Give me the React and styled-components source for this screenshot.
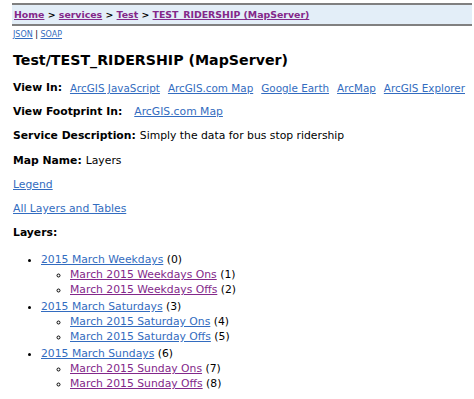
import React from "react";
import styled, { createGlobalStyle } from "styled-components";

const Global = createGlobalStyle`
  html, body { margin: 0; padding: 0; background: #fff; }
  body { font-family: "DejaVu Sans", Verdana, sans-serif; font-size: 10.8px; color: #000; }
`;

const Page = styled.div`
  padding: 3px 2px 0 12px;
`;

const Crumbs = styled.div`
  background: #e3eef8;
  border-top: 2px solid #808080;
  border-bottom: 2px solid #808080;
  padding: 3px 2px;
  font-weight: bold;
  font-size: 9.4px;
  line-height: 13px;
  white-space: nowrap;
`;

const Link = styled.a`
  color: ${(p) => (p.$visited ? "#83288a" : "#336cc0")};
  text-decoration: underline;
  cursor: pointer;
  white-space: nowrap;
`;

const Formats = styled.div`
  margin: 4px 0 0 1px;
  font-size: 8px;
  line-height: 10px;
  color: #000;
`;

const Title = styled.h2`
  margin: 10px 0 0 1px;
  font-size: 14.2px;
  line-height: 20px;
  font-weight: bold;
  white-space: nowrap;
`;

const Row = styled.div`
  margin: 0 0 0 1px;
  line-height: 14px;
  margin-top: ${(p) => p.$top || 10.2}px;
  display: flex;
  white-space: nowrap;
`;

const Label = styled.b`
  margin-right: ${(p) => p.$space || 4}px;
  flex-shrink: 0;
`;

const Links = styled.span`
  display: inline-flex;
  gap: 8px;
  flex-shrink: 0;
  font-size: 10.4px;
`;

const List = styled.ul`
  margin: 12px 0 0 0;
  padding-left: 29px;
  list-style: disc;
  line-height: 15px;
`;

const Item = styled.li`
  margin-bottom: 2px;
`;

const SubList = styled.ul`
  margin: 0;
  padding-left: 29px;
  list-style: circle;
  line-height: 15px;
`;

const layers = [
  {
    name: "2015 March Weekdays", id: 0, v: false,
    subs: [
      { name: "March 2015 Weekdays Ons", id: 1, v: true },
      { name: "March 2015 Weekdays Offs", id: 2, v: true },
    ],
  },
  {
    name: "2015 March Saturdays", id: 3, v: false,
    subs: [
      { name: "March 2015 Saturday Ons", id: 4, v: false },
      { name: "March 2015 Saturday Offs", id: 5, v: false },
    ],
  },
  {
    name: "2015 March Sundays", id: 6, v: false,
    subs: [
      { name: "March 2015 Sunday Ons", id: 7, v: true },
      { name: "March 2015 Sunday Offs", id: 8, v: true },
    ],
  },
];

export default function App() {
  return (
    <Page>
      <Global />
      <Crumbs>
        <Link $visited>Home</Link> &gt; <Link $visited>services</Link> &gt;{" "}
        <Link $visited>Test</Link> &gt; <Link $visited>TEST_RIDERSHIP (MapServer)</Link>
      </Crumbs>
      <Formats>
        <Link>JSON</Link> | <Link>SOAP</Link>
      </Formats>
      <Title>Test/TEST_RIDERSHIP (MapServer)</Title>
      <Row $top={11}>
        <Label $space={8}>View In:</Label>
        <Links>
          <Link>ArcGIS JavaScript</Link>
          <Link>ArcGIS.com Map</Link>
          <Link>Google Earth</Link>
          <Link>ArcMap</Link>
          <Link>ArcGIS Explorer</Link>
        </Links>
      </Row>
      <Row>
        <Label $space={12}>View Footprint In:</Label>
        <Link>ArcGIS.com Map</Link>
      </Row>
      <Row>
        <Label>Service Description:</Label> Simply the data for bus stop ridership
      </Row>
      <Row>
        <Label>Map Name:</Label> Layers
      </Row>
      <Row>
        <Link>Legend</Link>
      </Row>
      <Row>
        <Link>All Layers and Tables</Link>
      </Row>
      <Row>
        <b>Layers:</b>
      </Row>
      <List>
        {layers.map((l) => (
          <Item key={l.id}>
            <Link $visited={l.v}>{l.name}</Link> ({l.id})
            <SubList>
              {l.subs.map((s) => (
                <li key={s.id}>
                  <Link $visited={s.v}>{s.name}</Link> ({s.id})
                </li>
              ))}
            </SubList>
          </Item>
        ))}
      </List>
    </Page>
  );
}
